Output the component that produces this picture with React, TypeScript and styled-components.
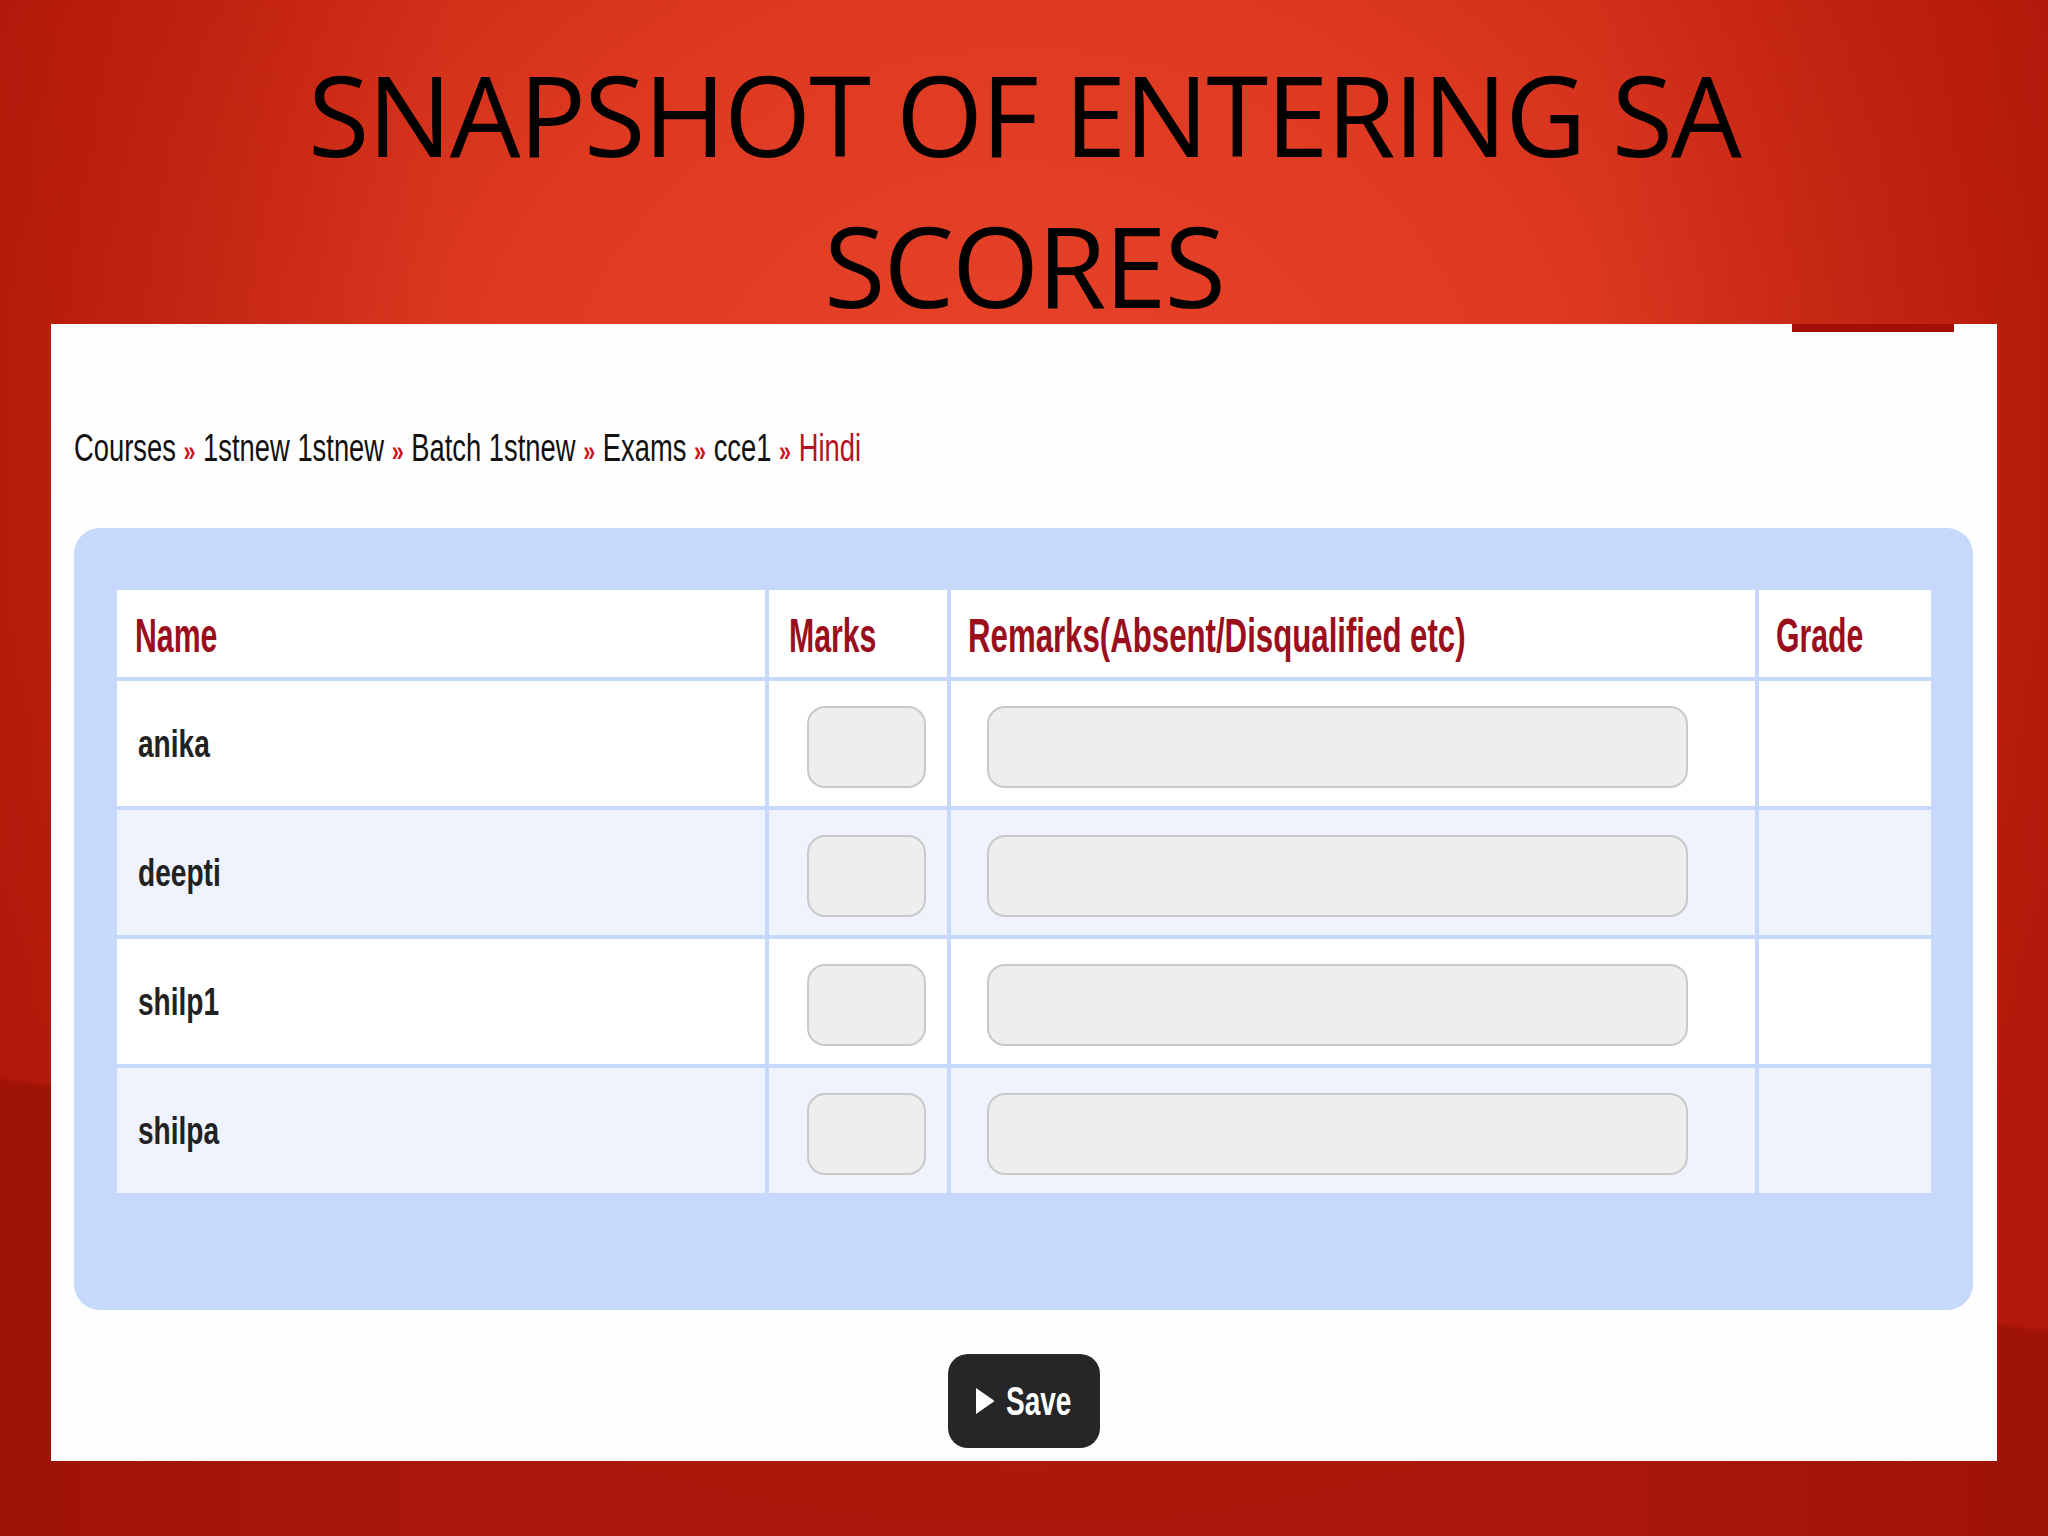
import React from 'react'
import styled, { createGlobalStyle } from 'styled-components'

const GlobalStyle = createGlobalStyle`
  html, body {
    margin: 0;
    padding: 0;
    background: #c21f10;
  }
  * {
    box-sizing: border-box;
  }
`

const Page = styled.div`
  position: relative;
  width: 2048px;
  height: 1536px;
  overflow: hidden;
  display: flex;
  flex-direction: column;
  background:
    linear-gradient(187deg, rgba(0, 0, 0, 0) 74.3%, rgba(110, 8, 0, 0.28) 74.6%),
    linear-gradient(90deg, rgba(150, 12, 0, 0.35) 0%, rgba(0, 0, 0, 0) 22%, rgba(0, 0, 0, 0) 78%, rgba(150, 12, 0, 0.35) 100%),
    radial-gradient(ellipse 60% 70% at 50% 30%, #e8442a 0%, #de3a22 45%, #c82612 80%, #c01e0e 100%);
`

const Title = styled.h1`
  margin: 0;
  height: 324px;
  padding-top: 38px;
  font-family: 'Open Sans', 'Noto Sans', sans-serif;
  font-weight: 400;
  font-size: 112px;
  line-height: 151px;
  letter-spacing: -2px;
  text-align: center;
  color: #000;
`

const Sheet = styled.div`
  position: relative;
  margin-left: 51px;
  width: 1946px;
  height: 1137px;
  background: #fefefe;
  padding: 102px 24px 0 23px;
  display: flex;
  flex-direction: column;
`

const Tab = styled.div`
  position: absolute;
  top: 0;
  right: 43px;
  width: 162px;
  height: 8px;
  background: #a10f08;
`

const Squeeze = styled.span<{ $sx: number }>`
  display: inline-block;
  white-space: nowrap;
  transform: scaleX(${(p) => p.$sx});
  transform-origin: left center;
`

const Breadcrumb = styled.div`
  height: 44px;
  font-family: 'Liberation Sans', Arial, sans-serif;
  font-size: 38px;
  line-height: 44px;
  color: #111;
`

const Sep = styled.span`
  color: #d0141c;
  font-weight: 700;
  font-size: 30px;
`

const Current = styled.span`
  color: #b5121e;
`

const BluePanel = styled.div`
  margin-top: 58px;
  height: 782px;
  background: #c6d9fc;
  border-radius: 26px;
  padding: 62px 42px 0 43px;
`

const Grid = styled.div`
  display: grid;
  grid-template-columns: 648px 178px 804px 172px;
  grid-template-rows: 87px repeat(4, 125px);
  gap: 4px;
`

const Cell = styled.div<{ $alt?: boolean; $pad?: number }>`
  display: flex;
  align-items: center;
  padding-left: ${(p) => p.$pad ?? 20}px;
  background: ${(p) => (p.$alt ? '#eef3fe' : '#ffffff')};
  font-family: 'Liberation Sans', Arial, sans-serif;
  font-weight: 700;
`

const HeadText = styled(Squeeze)`
  font-size: 48px;
  color: #9a0f1b;
  margin-top: 4px;
`

const NameText = styled(Squeeze)`
  font-size: 39px;
  color: #222;
`

const Field = styled.input<{ $w: number }>`
  width: ${(p) => p.$w}px;
  height: 82px;
  margin-top: 6px;
  background: #eeeeee;
  border: 2px solid #c9c9c9;
  border-radius: 18px;
  outline: none;
`

const Footer = styled.div`
  display: flex;
  justify-content: center;
  padding-top: 44px;
`

const SaveButton = styled.button`
  width: 152px;
  height: 94px;
  border: none;
  border-radius: 20px;
  background: #262628;
  color: #fff;
  display: flex;
  align-items: center;
  padding: 0 0 0 28px;
  gap: 12px;
  font-family: 'Liberation Sans', Arial, sans-serif;
  font-weight: 700;
  font-size: 40px;
  cursor: pointer;
`

const students = ['anika', 'deepti', 'shilp1', 'shilpa']

const App = () => {
  return (
    <Page>
      <GlobalStyle />
      <Title>
        SNAPSHOT OF ENTERING SA
        <br />
        SCORES
      </Title>
      <Sheet>
        <Tab />
        <Breadcrumb>
          <Squeeze $sx={0.72}>
            Courses <Sep>»</Sep> 1stnew 1stnew <Sep>»</Sep> Batch 1stnew <Sep>»</Sep> Exams{' '}
            <Sep>»</Sep> cce1 <Sep>»</Sep> <Current>Hindi</Current>
          </Squeeze>
        </Breadcrumb>
        <BluePanel>
          <Grid>
            <Cell $pad={18}>
              <HeadText $sx={0.63}>Name</HeadText>
            </Cell>
            <Cell>
              <HeadText $sx={0.63}>Marks</HeadText>
            </Cell>
            <Cell $pad={17}>
              <HeadText $sx={0.65}>Remarks(Absent/Disqualified etc)</HeadText>
            </Cell>
            <Cell $pad={17}>
              <HeadText $sx={0.63}>Grade</HeadText>
            </Cell>
            {students.map((name, i) => (
              <React.Fragment key={name}>
                <Cell $alt={i % 2 === 1} $pad={21}>
                  <NameText $sx={0.72}>{name}</NameText>
                </Cell>
                <Cell $alt={i % 2 === 1} $pad={38}>
                  <Field $w={119} type="text" />
                </Cell>
                <Cell $alt={i % 2 === 1} $pad={36}>
                  <Field $w={701} type="text" />
                </Cell>
                <Cell $alt={i % 2 === 1} />
              </React.Fragment>
            ))}
          </Grid>
        </BluePanel>
        <Footer>
          <SaveButton>
            <svg width="20" height="28" viewBox="0 0 20 28">
              <path d="M0 0 L20 14 L0 28 Z" fill="#fff" />
            </svg>
            <Squeeze $sx={0.7}>Save</Squeeze>
          </SaveButton>
        </Footer>
      </Sheet>
    </Page>
  )
}

export default App
